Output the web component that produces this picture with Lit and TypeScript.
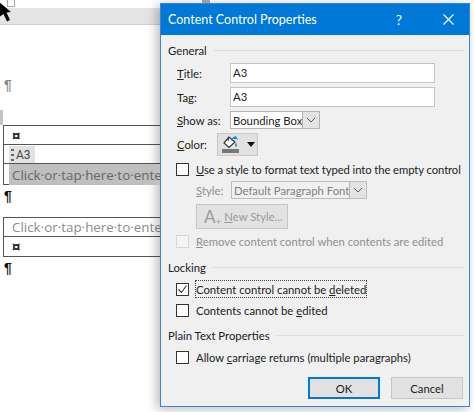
import { LitElement, html, css } from "lit";
import { customElement } from "lit/decorators.js";

const chevron = html`<svg width="10" height="6" viewBox="0 0 10 6"><path d="M1 1l4 4 4-4" fill="none" stroke="#555" stroke-width="1"/></svg>`;

@customElement("app-root")
export class AppRoot extends LitElement {
  static styles = css`
    :host { display: block; position: relative; width: 474px; height: 412px; overflow: hidden; background: #fff; font-family: Lato, sans-serif; }
    * { box-sizing: border-box; }
    u { text-underline-offset: 1px; text-decoration-thickness: 1px; }
    .mt4 { margin-top: 4px; }
    .mt5 { margin-top: 5px; }
    .mt6 { margin-top: 6px; }
    .mt9 { margin-top: 9px; }
    .mt10 { margin-top: 10px; }
    .mt12 { margin-top: 12px; }
    .h16 { height: 16px; }
    .h18 { height: 18px; }

    .doc { width: 160px; height: 412px; overflow: hidden; padding-top: 8px; font-family: "Open Sans", sans-serif; color: #222; }
    .band { height: 17px; background: #e4e4e4; border-bottom: 1px solid #cfcfcf; }
    .para { font-family: "Liberation Sans", sans-serif; font-size: 14px; font-weight: 700; line-height: 20px; height: 20px; padding-left: 4px; color: #111; }
    .para.faint { color: #8a8a8a; margin-top: 50px; }
    .para.c { margin-top: 1px; }
    .para.d { margin-top: 1px; }
    .stub { width: 3px; height: 15px; margin-top: 15px; background: #c4c4c4; }
    .table { width: 200px; margin-left: 3px; border: 1px solid #555; border-right: 0; }
    .row { height: 19px; border-bottom: 1px solid #555; display: flex; align-items: center; padding-left: 8px; font-family: "Liberation Sans", sans-serif; font-size: 15px; font-weight: 700; color: #222; }
    .row.last { border-bottom: 0; }
    .row.ph { font-family: "Open Sans", sans-serif; font-weight: 400; font-size: 13.4px; color: #8c8c8c; padding-left: 8px; white-space: nowrap; }
    .table.a { height: 60px; }
    .table.a .tabrow { height: 19px; border-bottom: 1px solid #555; position: relative; }
    .tabchip { position: absolute; left: 5px; top: 1px; height: 17px; width: 26px; background: #e2e2e2; display: flex; align-items: center; gap: 2px; padding-left: 2px; font-family: Roboto, sans-serif; font-size: 12px; color: #444; font-weight: 400; }
    .grip { width: 3px; height: 12px; flex: none; background: repeating-linear-gradient(#666 0 2px, transparent 2px 5px); }
    .hl { position: absolute; left: 5px; top: 0; height: 21px; width: 200px; background: #bfbfbf; color: #666; font-size: 13.4px; font-weight: 400; display: flex; align-items: center; padding-left: 3px; white-space: nowrap; z-index: 1; }
    .selrow { position: relative; height: 19px; }
    .gap { height: 11px; }

    .corner { position: absolute; left: 7px; top: 0; width: 8px; height: 7px; border: 1px solid #aaa; border-top: 0; background: #fff; }
    .cursor { position: absolute; left: 0; top: 0; }
    .topbit { position: absolute; left: 202px; top: 0; width: 8px; height: 4px; background: #aaa; }

    .dialog { position: absolute; left: 160px; top: 3px; width: 310px; height: 404px; background: #f0f0f0; border: 1px solid #3a86cf; box-shadow: -3px 2px 10px rgba(0,0,0,.28); font-size: 11.3px; color: #222; display: flex; flex-direction: column; }
    .titlebar { height: 31px; flex: none; background: #0078d7; color: #fff; display: flex; align-items: center; padding-left: 7px; font-size: 12.5px; }
    .titlebar span { flex: 1; }
    .help { flex: none !important; width: 14px; margin-right: 37px; font-size: 14px; text-align: center; }
    .close { margin-right: 15px; display: block; }
    .body { flex: 1; padding: 7px 5px 0 7px; display: flex; flex-direction: column; }
    .head { display: flex; align-items: center; gap: 7px; height: 16px; flex: none; }
    .head i { flex: 1; height: 1px; background: #dcdcdc; }
    .line { display: flex; align-items: center; flex: none; padding-left: 9px; white-space: nowrap; }
    .tight { letter-spacing: -.1px; }
    .lab { width: 53px; }
    .input { height: 20px; width: 205px; background: #fff; border: 1px solid #c4c4c4; padding-left: 2px; line-height: 18px; }
    .select { display: flex; height: 18px; border: 1px solid #b4b4b4; background: #fff; align-items: center; padding-left: 2px; }
    .select .txt { flex: 1; }
    .select.show { width: 90px; }
    .select.dis { width: 136px; background: #f0f0f0; color: #808080; border-color: #bdbdbd; }
    .select .arrow { width: 18px; height: 16px; background: #e3e3e3; border-left: 1px solid #b4b4b4; display: flex; align-items: center; justify-content: center; }
    .colorbtn { width: 41px; height: 23px; background: #e1e1e1; border: 1px solid #c8c8c8; display: flex; align-items: center; padding-left: 4px; gap: 7px; margin-left: -13px; }
    .tri { width: 0; height: 0; border: 4px solid transparent; border-top: 5px solid #111; border-bottom: 0; }
    .cb { width: 13px; height: 13px; flex: none; border: 1px solid #333; background: #fff; margin-left: -1px; margin-right: 7px; display: flex; align-items: center; justify-content: center; }
    .cb.off { border-color: #d8d8d8; background: #f4f4f4; }
    .muted { color: #8f8f8f; }
    .style { padding-left: 28px; }
    .style .lab { width: 35px; }
    .newbtn { width: 92px; height: 25px; margin-left: 28px; background: #e2e2e2; border: 1px solid #c6c6c6; color: #9a9a9a; display: flex; align-items: center; padding-left: 7px; flex: none; white-space: nowrap; }
    .newbtn b { font-weight: 400; font-size: 17px; line-height: 1; }
    .newbtn small { font-size: 10px; margin-right: 3px; margin-top: 8px; }
    .focus { border: 1px dotted #444; height: 18px; display: flex; align-items: center; padding: 0; margin-left: -1px; }
    .btns { display: flex; gap: 11px; padding-left: 140px; flex: none; }
    .btn { width: 72px; height: 22px; background: #e1e1e1; border: 1px solid #c6c6c6; display: flex; align-items: center; justify-content: center; }
    .btn.def { border: 2px solid #0078d7; }
  `;

  render() {
    return html`
      <div class="doc">
        <div class="band"></div>
        <div class="para faint">¶</div>
        <div class="stub"></div>
        <div class="table a">
          <div class="row">¤</div>
          <div class="tabrow"><div class="tabchip"><span class="grip"></span>A3</div></div>
          <div class="selrow"><div class="hl">Click·or·tap·here·to·enter·text.</div></div>
        </div>
        <div class="para c">¶</div>
        <div class="gap"></div>
        <div class="table b">
          <div class="row ph">Click·or·tap·here·to·enter·text.</div>
          <div class="row last">¤</div>
        </div>
        <div class="para d">¶</div>
      </div>

      <div class="topbit"></div>
      <div class="corner"></div>
      <svg class="cursor" width="14" height="23" viewBox="0 0 14 23"><path d="M-2 1L11 12L6.500 12.500L10 20L7 21.500L3.500 14L-2 18z" fill="#000"/></svg>

      <div class="dialog">
        <div class="titlebar">
          <span>Content Control Properties</span>
          <span class="help">?</span>
          <svg class="close" width="11" height="11" viewBox="0 0 11 11"><path d="M.5.5l10 10M10.500.5l-10 10" stroke="#fff" stroke-width="1.100"/></svg>
        </div>
        <div class="body">
          <div class="head">General<i></i></div>
          <div class="line mt5"><span class="lab"><u>T</u>itle:</span><div class="input">A3</div></div>
          <div class="line mt4"><span class="lab">Ta<u>g</u>:</span><div class="input">A3</div></div>
          <div class="line mt4"><span class="lab"><u>S</u>how as:</span>
            <div class="select show"><span class="txt">Bounding Box</span><span class="arrow">${chevron}</span></div></div>
          <div class="line mt4"><span class="lab"><u>C</u>olor:</span>
            <div class="colorbtn">
              <svg width="18" height="19" viewBox="0 0 18 19">
                <path d="M7 2L2 8l5 4.500 6-5.500z" fill="#fff" stroke="#333" stroke-width="1.200"/>
                <path d="M7 2L6 6" stroke="#333"/>
                <path d="M10 6c0-3 2-4 4-3l-1-1.500M14 3l-2 .5" fill="none" stroke="#1f7fc4" stroke-width="1.500"/>
                <path d="M14 8.500v3" stroke="#1f7fc4" stroke-width="1.500"/>
                <rect x="0" y="14" width="17" height="4" fill="#777"/>
              </svg>
              <span class="tri"></span>
            </div></div>
          <div class="line mt5 h16 tight"><span class="cb"></span><span><u>U</u>se a style to format text typed into the empty control</span></div>
          <div class="line style muted mt4"><span class="lab"><u>S</u>tyle:</span>
            <div class="select dis"><span class="txt">Default Paragraph Font</span><span class="arrow">${chevron}</span></div></div>
          <div class="newbtn mt5"><b>A</b><small>+</small><span><u>N</u>ew Style...</span></div>
          <div class="line muted mt4 h16"><span class="cb off"></span><span><u>R</u>emove content control when contents are edited</span></div>
          <div class="head mt10">Locking<i></i></div>
          <div class="line mt5 h18"><span class="cb">
            <svg width="11" height="11" viewBox="0 0 11 11"><path d="M1.500 5.500l3 3 5-7" fill="none" stroke="#333" stroke-width="1.100"/></svg></span>
            <span class="focus">Content control cannot be&nbsp;<u>d</u>eleted</span></div>
          <div class="line mt4 h16"><span class="cb"></span><span>Contents cannot be <u>e</u>dited</span></div>
          <div class="head mt9">Plain Text Properties<i></i></div>
          <div class="line mt6 h16"><span class="cb"></span><span>Allow <u>c</u>arriage returns (multiple paragraphs)</span></div>
          <div class="btns mt12"><div class="btn def">OK</div><div class="btn">Cancel</div></div>
        </div>
      </div>
    `;
  }
}
